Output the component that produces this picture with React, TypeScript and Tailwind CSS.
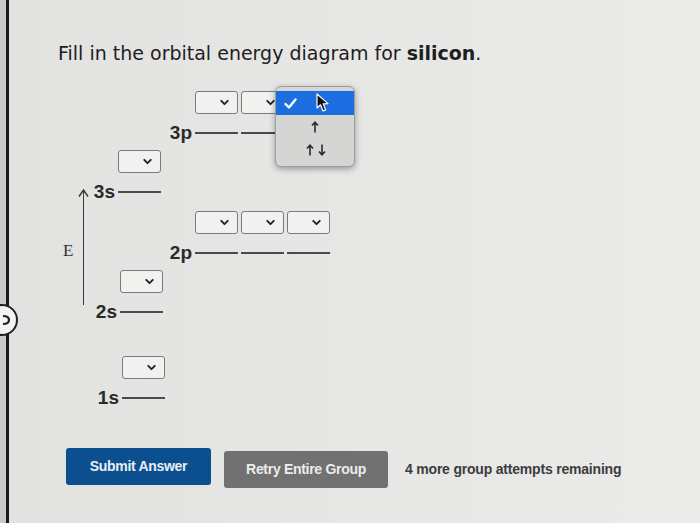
import { ChevronDown } from "lucide-react";

type OrbitalProps = {
  label: string;
  count: number;
  pos: string;
};

const Dropdown = () => {
  return (
    <div className="flex h-[23px] w-[43px] items-center justify-end rounded-[3px] border border-[#7a7a7a] bg-[#f1f1f0] pr-[6px]">
      <ChevronDown size={13} strokeWidth={3.5} className="text-[#222]" />
    </div>
  );
};

// one energy level: the selects sit above the lines, label on the left
const Orbital = ({ label, count, pos }: OrbitalProps) => {
  const slots = Array.from({ length: count });
  return (
    <div className={`absolute grid grid-cols-[29px_auto] items-center gap-y-[8px] ${pos}`}>
      <div />
      <div className="flex gap-[3px]">
        {slots.map((_, i) => (
          <Dropdown key={i} />
        ))}
      </div>
      <span className="pr-[3px] text-right text-[19px] font-bold leading-[22px] text-[#2a2a2a]">
        {label}
      </span>
      <div className="flex gap-[3px]">
        {slots.map((_, i) => (
          <div key={i} className="h-[2px] w-[43px] bg-[#4a4a4a]" />
        ))}
      </div>
    </div>
  );
};

const UpArrow = () => (
  <svg width="8" height="12" viewBox="0 0 8 12">
    <path d="M4 11.5 L4 1.5 M1 4.5 L4 1.2 L7 4.5" stroke="#2b2b2b" strokeWidth="1.6" fill="none" />
  </svg>
);

const DownArrow = () => (
  <svg width="8" height="12" viewBox="0 0 8 12">
    <path d="M4 0.5 L4 10.5 M1 7.5 L4 10.8 L7 7.5" stroke="#2b2b2b" strokeWidth="1.6" fill="none" />
  </svg>
);

const SpinMenu = () => {
  return (
    <div className="absolute left-[275px] top-[19px] h-[81px] w-[80px] rounded-md border border-[#9d9d9d] bg-[#d5d5d4] pt-[4px] shadow-[0_2px_6px_rgba(0,0,0,0.35)]">
      <div className="relative flex h-[24px] items-center bg-[#1c6ee0] pl-[8px]">
        <svg width="13" height="11" viewBox="0 0 13 11">
          <path d="M1.5 6 L5 9.5 L11.5 1.5" stroke="white" strokeWidth="2.4" fill="none" strokeLinecap="round" strokeLinejoin="round" />
        </svg>
        <svg className="absolute left-[40px] top-[2px]" width="14" height="20" viewBox="0 0 14 20">
          <path d="M1 1 L1 15 L4.5 11.8 L7 18 L9.6 16.9 L7.2 10.8 L12 10.6 Z" fill="#111" stroke="white" strokeWidth="1.2" strokeLinejoin="round" />
        </svg>
      </div>
      <div className="mt-[6px] flex flex-col items-center gap-[11px]">
        <UpArrow />
        <div className="flex gap-[4px] pl-[1px]">
          <UpArrow />
          <DownArrow />
        </div>
      </div>
    </div>
  );
};

const App = () => {
  return (
    <div className="relative flex h-[523px] w-[700px] overflow-hidden bg-gradient-to-r from-[#e2e2e0] to-[#ebebea] font-['Liberation_Sans',Arial,sans-serif]">
      {/* window edge on the left */}
      <div className="flex w-[11px] shrink-0">
        <div className="w-[6px] bg-[#c9c9c7]" />
        <div className="w-[3px] bg-[#1a1a1a]" />
      </div>
      <div className="absolute left-[-14px] top-[304px] flex h-[32px] w-[32px] items-center justify-end rounded-full border-2 border-[#222] bg-[#f4f4f4] pr-[5px]">
        <svg width="10" height="12" viewBox="0 0 10 12">
          <path d="M2 2 Q8 2 8 6 Q8 10 2 10" stroke="#222" strokeWidth="2.2" fill="none" />
        </svg>
      </div>

      <div className="flex flex-1 flex-col pl-[47px] pt-[40px]">
        <h1 className="font-['DejaVu_Sans',sans-serif] text-[19px] leading-[27px] text-[#1e1e1e]">
          Fill in the orbital energy diagram for <span className="font-bold">silicon</span>.
        </h1>

        <div className="relative -ml-[58px] h-[378px]">
          <Orbital label="3p" count={3} pos="left-[166px] top-[24px]" />
          <SpinMenu />
          <Orbital label="3s" count={1} pos="left-[89px] top-[83px]" />

          {/* energy axis */}
          <div className="absolute left-[78px] top-[122px] flex h-[116px] w-[11px] flex-col items-center">
            <svg width="11" height="8" viewBox="0 0 11 8">
              <path d="M1 7.5 L5.5 1 L10 7.5" stroke="#333" strokeWidth="1.4" fill="none" />
            </svg>
            <div className="-mt-[7px] w-[1.5px] flex-1 bg-[#3a3a3a]" />
          </div>
          <span className="absolute left-[63px] top-[171px] font-['Liberation_Serif',serif] text-[17px] text-[#333]">
            E
          </span>

          <Orbital label="2p" count={3} pos="left-[166px] top-[144px]" />
          <Orbital label="2s" count={1} pos="left-[91px] top-[203px]" />
          <Orbital label="1s" count={1} pos="left-[93px] top-[289px]" />
        </div>

        <div className="flex items-center">
          <button className="ml-[8px] h-[37px] w-[145px] rounded-[3px] bg-[#0b4f8f] text-[14px] font-bold tracking-[-0.3px] text-[#e9eef4]">
            Submit Answer
          </button>
          <button className="ml-[13px] mt-[6px] h-[37px] w-[164px] rounded-[3px] bg-[#717171] text-[14px] font-bold tracking-[-0.3px] text-[#ececec]">
            Retry Entire Group
          </button>
          <span className="ml-[17px] mt-[6px] text-[14px] font-bold tracking-[-0.2px] text-[#3c3c3c]">
            4 more group attempts remaining
          </span>
        </div>
      </div>
    </div>
  );
};

export default App;
